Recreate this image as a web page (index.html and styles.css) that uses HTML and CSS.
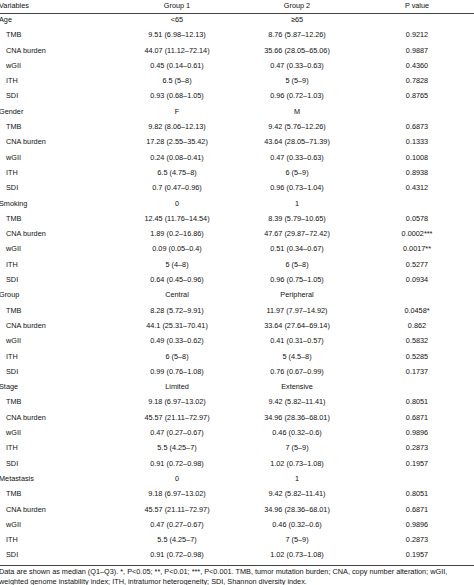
FILE: index.html
```html
<!DOCTYPE html>
<html>
<head>
<meta charset="utf-8">
<link rel="stylesheet" href="styles.css">
</head>
<body>
<div class="page">
<table class="stats">
  <thead>
    <tr><th class="var">Variables</th><th>Group 1</th><th>Group 2</th><th>P value</th></tr>
  </thead>
  <tbody>
    <tr><td class="cat">Age</td><td>&lt;65</td><td>≥65</td><td></td></tr>
    <tr><td class="sub">TMB</td><td>9.51 (6.98–12.13)</td><td>8.76 (5.87–12.26)</td><td>0.9212</td></tr>
    <tr><td class="sub">CNA burden</td><td>44.07 (11.12–72.14)</td><td>35.66 (28.05–65.06)</td><td>0.9887</td></tr>
    <tr><td class="sub">wGII</td><td>0.45 (0.14–0.61)</td><td>0.47 (0.33–0.63)</td><td>0.4360</td></tr>
    <tr><td class="sub">ITH</td><td>6.5 (5–8)</td><td>5 (5–9)</td><td>0.7828</td></tr>
    <tr><td class="sub">SDI</td><td>0.93 (0.68–1.05)</td><td>0.96 (0.72–1.03)</td><td>0.8765</td></tr>

    <tr><td class="cat">Gender</td><td>F</td><td>M</td><td></td></tr>
    <tr><td class="sub">TMB</td><td>9.82 (8.06–12.13)</td><td>9.42 (5.76–12.26)</td><td>0.6873</td></tr>
    <tr><td class="sub">CNA burden</td><td>17.28 (2.55–35.42)</td><td>43.64 (28.05–71.39)</td><td>0.1333</td></tr>
    <tr><td class="sub">wGII</td><td>0.24 (0.08–0.41)</td><td>0.47 (0.33–0.63)</td><td>0.1008</td></tr>
    <tr><td class="sub">ITH</td><td>6.5 (4.75–8)</td><td>6 (5–9)</td><td>0.8938</td></tr>
    <tr><td class="sub">SDI</td><td>0.7 (0.47–0.96)</td><td>0.96 (0.73–1.04)</td><td>0.4312</td></tr>

    <tr><td class="cat">Smoking</td><td>0</td><td>1</td><td></td></tr>
    <tr><td class="sub">TMB</td><td>12.45 (11.76–14.54)</td><td>8.39 (5.79–10.65)</td><td>0.0578</td></tr>
    <tr><td class="sub">CNA burden</td><td>1.89 (0.2–16.86)</td><td>47.67 (29.87–72.42)</td><td>0.0002***</td></tr>
    <tr><td class="sub">wGII</td><td>0.09 (0.05–0.4)</td><td>0.51 (0.34–0.67)</td><td>0.0017**</td></tr>
    <tr><td class="sub">ITH</td><td>5 (4–8)</td><td>6 (5–8)</td><td>0.5277</td></tr>
    <tr><td class="sub">SDI</td><td>0.64 (0.45–0.96)</td><td>0.96 (0.75–1.05)</td><td>0.0934</td></tr>

    <tr><td class="cat">Group</td><td>Central</td><td>Peripheral</td><td></td></tr>
    <tr><td class="sub">TMB</td><td>8.28 (5.72–9.91)</td><td>11.97 (7.97–14.92)</td><td>0.0458*</td></tr>
    <tr><td class="sub">CNA burden</td><td>44.1 (25.31–70.41)</td><td>33.64 (27.64–69.14)</td><td>0.862</td></tr>
    <tr><td class="sub">wGII</td><td>0.49 (0.33–0.62)</td><td>0.41 (0.31–0.57)</td><td>0.5832</td></tr>
    <tr><td class="sub">ITH</td><td>6 (5–8)</td><td>5 (4.5–8)</td><td>0.5285</td></tr>
    <tr><td class="sub">SDI</td><td>0.99 (0.76–1.08)</td><td>0.76 (0.67–0.99)</td><td>0.1737</td></tr>

    <tr><td class="cat">Stage</td><td>Limited</td><td>Extensive</td><td></td></tr>
    <tr><td class="sub">TMB</td><td>9.18 (6.97–13.02)</td><td>9.42 (5.82–11.41)</td><td>0.8051</td></tr>
    <tr><td class="sub">CNA burden</td><td>45.57 (21.11–72.97)</td><td>34.96 (28.36–68.01)</td><td>0.6871</td></tr>
    <tr><td class="sub">wGII</td><td>0.47 (0.27–0.67)</td><td>0.46 (0.32–0.6)</td><td>0.9896</td></tr>
    <tr><td class="sub">ITH</td><td>5.5 (4.25–7)</td><td>7 (5–9)</td><td>0.2873</td></tr>
    <tr><td class="sub">SDI</td><td>0.91 (0.72–0.98)</td><td>1.02 (0.73–1.08)</td><td>0.1957</td></tr>

    <tr><td class="cat">Metastasis</td><td>0</td><td>1</td><td></td></tr>
    <tr><td class="sub">TMB</td><td>9.18 (6.97–13.02)</td><td>9.42 (5.82–11.41)</td><td>0.8051</td></tr>
    <tr><td class="sub">CNA burden</td><td>45.57 (21.11–72.97)</td><td>34.96 (28.36–68.01)</td><td>0.6871</td></tr>
    <tr><td class="sub">wGII</td><td>0.47 (0.27–0.67)</td><td>0.46 (0.32–0.6)</td><td>0.9896</td></tr>
    <tr><td class="sub">ITH</td><td>5.5 (4.25–7)</td><td>7 (5–9)</td><td>0.2873</td></tr>
    <tr class="last"><td class="sub">SDI</td><td>0.91 (0.72–0.98)</td><td>1.02 (0.73–1.08)</td><td>0.1957</td></tr>
  </tbody>
</table>
<p class="note">Data are shown as median (Q1–Q3). *, P&lt;0.05; **, P&lt;0.01; ***, P&lt;0.001. TMB, tumor mutation burden; CNA, copy number alteration; wGII,<br>weighted genome instability index; ITH, intratumor heterogeneity; SDI, Shannon diversity index.</p>
</div>
</body>
</html>
```
FILE: styles.css
```css
html, body {
  margin: 0;
  padding: 0;
  background: #ffffff;
  overflow: hidden;
}

.page {
  margin-left: -1px;
  font-family: "Liberation Sans", Arial, sans-serif;
  font-size: 7.3px;
  color: #111111;
}

.stats {
  border-collapse: collapse;
  table-layout: fixed;
  width: 478px;
}

.stats th {
  font-weight: normal;
  height: 13px;
  padding: 0 0 1px;
  line-height: 12px;
  text-align: center;
  border-bottom: 1px solid #444444;
  width: 120px;
  box-sizing: border-box;
}

.stats th.var {
  width: 118px;
  text-align: left;
}

.stats td {
  padding: 0 0 3px;
  line-height: 12.3px;
  text-align: center;
  white-space: nowrap;
}

.stats td.cat {
  text-align: left;
}

.stats td.sub {
  text-align: left;
  padding-left: 7px;
}

.stats tr.last td {
  border-bottom: 1px solid #444444;
}

.note {
  margin: 0;
  padding-top: 1px;
  line-height: 10.5px;
  white-space: nowrap;
}
```
